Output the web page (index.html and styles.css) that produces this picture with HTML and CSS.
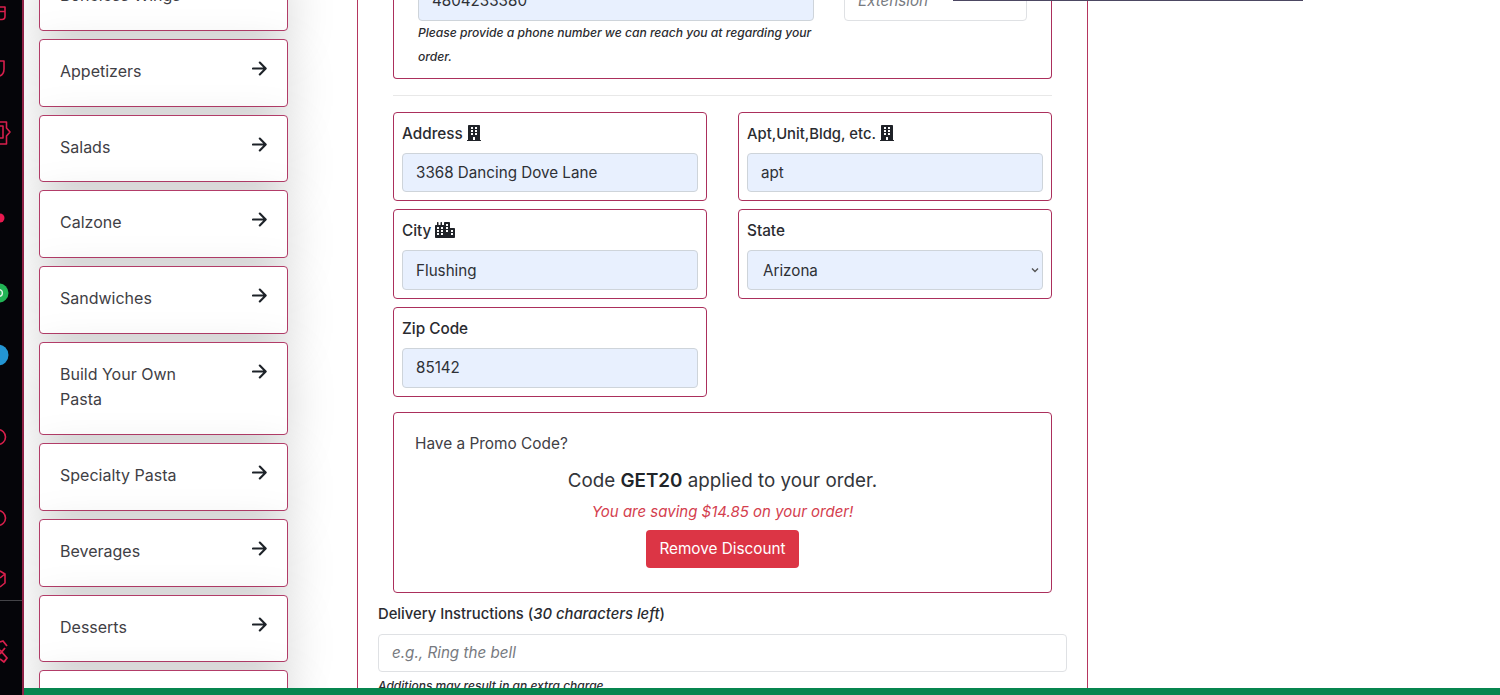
FILE: index.html
```html
<!DOCTYPE html>
<html lang="en">
<head>
<meta charset="utf-8">
<title>Checkout</title>
<link rel="stylesheet" href="styles.css">
</head>
<body>
<svg class="sprite" aria-hidden="true">
  <symbol id="i-arrow" viewBox="0 0 15 15"><path d="M1 7.5H13.6M7.8 1.6L13.7 7.5L7.8 13.4" fill="none" stroke="currentColor" stroke-width="2.1" stroke-linecap="round" stroke-linejoin="round"/></symbol>
  <symbol id="i-building" viewBox="0 0 448 512"><path fill="currentColor" d="M436 480h-20V24c0-13.255-10.745-24-24-24H56C42.745 0 32 10.745 32 24v456H12c-6.627 0-12 5.373-12 12v20h448v-20c0-6.627-5.373-12-12-12zM128 76c0-6.627 5.373-12 12-12h40c6.627 0 12 5.373 12 12v40c0 6.627-5.373 12-12 12h-40c-6.627 0-12-5.373-12-12V76zm0 96c0-6.627 5.373-12 12-12h40c6.627 0 12 5.373 12 12v40c0 6.627-5.373 12-12 12h-40c-6.627 0-12-5.373-12-12v-40zm52 148h-40c-6.627 0-12-5.373-12-12v-40c0-6.627 5.373-12 12-12h40c6.627 0 12 5.373 12 12v40c0 6.627-5.373 12-12 12zm76 160h-64v-84c0-6.627 5.373-12 12-12h40c6.627 0 12 5.373 12 12v84zm64-172c0 6.627-5.373 12-12 12h-40c-6.627 0-12-5.373-12-12v-40c0-6.627 5.373-12 12-12h40c6.627 0 12 5.373 12 12v40zm0-96c0 6.627-5.373 12-12 12h-40c-6.627 0-12-5.373-12-12v-40c0-6.627 5.373-12 12-12h40c6.627 0 12 5.373 12 12v40zm0-96c0 6.627-5.373 12-12 12h-40c-6.627 0-12-5.373-12-12V76c0-6.627 5.373-12 12-12h40c6.627 0 12 5.373 12 12v40z"/></symbol>
  <symbol id="i-city" viewBox="0 0 640 512"><path fill="currentColor" d="M616 192H480V24c0-13.26-10.74-24-24-24H312c-13.26 0-24 10.74-24 24v72h-64V16c0-8.84-7.16-16-16-16h-16c-8.84 0-16 7.16-16 16v80h-64V16c0-8.84-7.16-16-16-16H80c-8.84 0-16 7.16-16 16v80H24c-13.26 0-24 10.74-24 24v360c0 17.67 14.33 32 32 32h576c17.67 0 32-14.33 32-32V216c0-13.26-10.75-24-24-24zM128 404c0 6.63-5.37 12-12 12H76c-6.63 0-12-5.37-12-12v-40c0-6.63 5.37-12 12-12h40c6.63 0 12 5.37 12 12v40zm0-96c0 6.63-5.37 12-12 12H76c-6.63 0-12-5.37-12-12v-40c0-6.63 5.37-12 12-12h40c6.63 0 12 5.37 12 12v40zm0-96c0 6.63-5.37 12-12 12H76c-6.63 0-12-5.37-12-12v-40c0-6.63 5.37-12 12-12h40c6.63 0 12 5.37 12 12v40zm128 192c0 6.63-5.37 12-12 12h-40c-6.63 0-12-5.37-12-12v-40c0-6.63 5.37-12 12-12h40c6.63 0 12 5.37 12 12v40zm0-96c0 6.63-5.37 12-12 12h-40c-6.63 0-12-5.37-12-12v-40c0-6.63 5.37-12 12-12h40c6.63 0 12 5.37 12 12v40zm0-96c0 6.63-5.37 12-12 12h-40c-6.63 0-12-5.37-12-12v-40c0-6.63 5.37-12 12-12h40c6.63 0 12 5.37 12 12v40zm160 96c0 6.63-5.37 12-12 12h-40c-6.63 0-12-5.37-12-12v-40c0-6.63 5.37-12 12-12h40c6.63 0 12 5.37 12 12v40zm0-96c0 6.63-5.37 12-12 12h-40c-6.63 0-12-5.37-12-12v-40c0-6.63 5.37-12 12-12h40c6.63 0 12 5.37 12 12v40zm0-96c0 6.63-5.37 12-12 12h-40c-6.63 0-12-5.37-12-12V76c0-6.63 5.37-12 12-12h40c6.63 0 12 5.37 12 12v40zm160 288c0 6.63-5.37 12-12 12h-40c-6.63 0-12-5.37-12-12v-40c0-6.63 5.37-12 12-12h40c6.63 0 12 5.37 12 12v40zm0-96c0 6.63-5.37 12-12 12h-40c-6.63 0-12-5.37-12-12v-40c0-6.63 5.37-12 12-12h40c6.63 0 12 5.37 12 12v40z"/></symbol>
</svg>

<div class="page">
  <aside class="rail">
    <svg class="rail-art" width="22" height="695" viewBox="0 0 22 695" fill="none" stroke="#d81f4c" stroke-width="1.6" stroke-linejoin="round" aria-hidden="true">
      <path d="M0 7H5V16Q5 19.5 2 19.5H0M0 11.5H5"/>
      <path d="M0 61H4V69Q4 74 0 76"/>
      <path d="M0 122H6.5V128L10 132L6.5 136V144H0M0 126H3V138H0"/>
      <circle cx="0" cy="218" r="4.5" fill="#e8194f" stroke="none"/>
      <circle cx="-1" cy="293" r="9.5" fill="#22b455" stroke="none"/>
      <circle cx="-1" cy="293" r="3.4" stroke="#e6f5ea" stroke-width="1.4"/>
      <circle cx="-2" cy="355" r="10.5" fill="#2395d3" stroke="none"/>
      <circle cx="-2" cy="437" r="7.5"/>
      <circle cx="-2" cy="518" r="7.5"/>
      <path d="M0 571L5 574V583L0 587M0 578L5 574"/>
      <path d="M0 600.5H22" stroke="#444448" stroke-width="1"/>
      <path d="M0 642L3 641L7 646M0 650L7 658L4 662L0 659M0 654L5 648" stroke-width="1.8"/>
    </svg>
  </aside>

  <div class="workspace">
    <div class="scroller">
      <nav class="cats">
        <a class="cat"><span class="cat-name">Boneless Wings</span><svg class="cat-arrow"><use href="#i-arrow"/></svg></a>
        <a class="cat"><span class="cat-name">Appetizers</span><svg class="cat-arrow"><use href="#i-arrow"/></svg></a>
        <a class="cat"><span class="cat-name">Salads</span><svg class="cat-arrow"><use href="#i-arrow"/></svg></a>
        <a class="cat"><span class="cat-name">Calzone</span><svg class="cat-arrow"><use href="#i-arrow"/></svg></a>
        <a class="cat"><span class="cat-name">Sandwiches</span><svg class="cat-arrow"><use href="#i-arrow"/></svg></a>
        <a class="cat"><span class="cat-name">Build Your Own Pasta</span><svg class="cat-arrow"><use href="#i-arrow"/></svg></a>
        <a class="cat"><span class="cat-name">Specialty Pasta</span><svg class="cat-arrow"><use href="#i-arrow"/></svg></a>
        <a class="cat"><span class="cat-name">Beverages</span><svg class="cat-arrow"><use href="#i-arrow"/></svg></a>
        <a class="cat"><span class="cat-name">Desserts</span><svg class="cat-arrow"><use href="#i-arrow"/></svg></a>
        <a class="cat cat-empty"></a>
      </nav>

      <main class="order">
        <div class="inset">
          <section class="box phone-box">
            <div class="phone-col">
              <input class="field field-filled" value="4804233380" aria-label="Phone">
              <p class="note">Please provide a phone number we can reach you at regarding your order.</p>
            </div>
            <input class="field extension" placeholder="Extension" aria-label="Extension">
          </section>

          <hr class="rule">

          <div class="address-grid">
            <div class="box field-box">
              <label class="label">Address <svg class="ico-building"><use href="#i-building"/></svg></label>
              <input class="field field-filled" value="3368 Dancing Dove Lane">
            </div>
            <div class="box field-box">
              <label class="label label-tight">Apt,Unit,Bldg, etc. <svg class="ico-building"><use href="#i-building"/></svg></label>
              <input class="field field-filled" value="apt">
            </div>
            <div class="box field-box">
              <label class="label">City <svg class="ico-city"><use href="#i-city"/></svg></label>
              <input class="field field-filled" value="Flushing">
            </div>
            <div class="box field-box">
              <label class="label">State</label>
              <select class="field field-filled field-select"><option>Arizona</option></select>
            </div>
            <div class="box field-box">
              <label class="label">Zip Code</label>
              <input class="field field-filled" value="85142">
            </div>
          </div>

          <section class="box promo">
            <p class="promo-ask">Have a Promo Code?</p>
            <p class="promo-code">Code <strong>GET20</strong> applied to your order.</p>
            <p class="promo-save">You are saving $14.85 on your order!</p>
            <button class="btn-remove" type="button">Remove Discount</button>
          </section>
        </div>

        <label class="label label-delivery">Delivery Instructions (<em>30 characters left</em>)</label>
        <input class="field field-plain" placeholder="e.g., Ring the bell">
        <p class="note note-extra">Additions may result in an extra charge</p>
      </main>

      <aside class="side"></aside>
      <div class="menu-edge"></div>
    </div>
    <div class="green-bar"></div>
  </div>
</div>
</body>
</html>
```

FILE: styles.css
```css
* { box-sizing: border-box; }
html, body { margin: 0; height: 100%; overflow: hidden; }
body {
  font-family: Inter, "Liberation Sans", sans-serif;
  font-size: 15px;
  color: #333438;
  background: #fff;
}
.sprite { display: none; }

.page { display: flex; height: 695px; overflow: hidden; }

.rail {
  flex: 0 0 24px;
  background: #050509;
  border-right: 2px solid #8f2347;
}
.rail-art { display: block; overflow: hidden; }

.workspace { flex: 1; min-width: 0; display: flex; flex-direction: column; }
.scroller { flex: 1; min-height: 0; display: flex; overflow: hidden; position: relative; }
.green-bar { flex: 0 0 7px; background: #07864f; }

/* categories */
.cats {
  flex: 0 0 333px;
  padding: 0 69px 0 15px;
  margin-top: -37px;
  display: flex;
  flex-direction: column;
  gap: 8px;
}
.cat {
  display: flex;
  justify-content: space-between;
  align-items: flex-start;
  flex: none;
  padding: 19px 20px 21.6px;
  line-height: 25.2px;
  font-size: 16px;
  background: #fff;
  border: 1px solid #b23c68;
  border-radius: 4px;
  box-shadow: 0 16px 48px rgba(0, 0, 0, .175);
  color: #3f4045;
}
.cat-empty { height: 67.8px; }
.cat-name { width: 140px; }
.cat-arrow { width: 15px; height: 15px; margin-top: 2px; color: #1d2228; }

/* order column */
.order {
  flex: 0 0 731px;
  padding: 0 20px;
  margin-top: -19px;
  border-left: 1px solid #b5365f;
  border-right: 1px solid #b5365f;
  background: #fff;
}
.inset { margin: 0 15px; }
.side { flex: 1; }

.box { background: #fff; border: 1px solid #ab2f5c; border-radius: 4px; }

.field {
  display: block;
  width: 100%;
  height: 39.7px;
  padding: 6px 13px;
  font: inherit;
  font-size: 15.2px;
  color: #2e3036;
  background: #fff;
  border: 1px solid #dfe1e4;
  border-radius: 4px;
  outline: 0;
}
.field::placeholder { color: #777a80; font-style: italic; }
.field-filled { background: #e8f0fe; border-color: #ced4da; }
.field-plain { height: 38.5px; }
.field-select {
  appearance: none;
  padding-left: 15px;
  background-image: url("data:image/svg+xml,%3Csvg xmlns='http://www.w3.org/2000/svg' width='8' height='6' viewBox='0 0 8 6'%3E%3Cpath d='M1 1.5L4 4.5L7 1.5' fill='none' stroke='%23555' stroke-width='1.4'/%3E%3C/svg%3E");
  background-repeat: no-repeat;
  background-position: right 3px center;
}

.phone-box {
  display: flex;
  align-items: flex-start;
  padding: 0 24px 0 24px;
  border-top: 0;
  border-top-left-radius: 0;
  border-top-right-radius: 0;
  gap: 30px;
}
.phone-col { flex: 0 0 396px; }
.extension { flex: 0 0 183px; }

.note {
  margin: 0;
  font-size: 12.1px;
  font-weight: 500;
  font-style: italic;
  line-height: 24.6px;
  color: #2b2c30;
  padding: 0 0 7.8px;
}
.note-extra { margin-top: 2px; font-size: 12px; }

.rule { margin: 16px 0; border: 0; border-top: 1px solid #e8e8e8; }

.address-grid {
  display: grid;
  grid-template-columns: 314px 314px;
  justify-content: space-between;
  row-gap: 8px;
}
.field-box { padding: 8px; height: 89.7px; }
.label {
  display: block;
  height: 24px;
  line-height: 26px;
  margin-bottom: 8px;
  font-weight: 500;
  font-size: 15.3px;
  color: #2a2b30;
}
.label-tight { font-size: 14.8px; }
.ico-building { width: 14px; height: 16px; vertical-align: -2px; color: #1f2228; }
.ico-city { width: 20px; height: 16px; vertical-align: -2px; color: #1f2228; }

.promo {
  margin-top: 15px;
  height: 181px;
  padding: 19px 21px 0;
  text-align: center;
}
.promo-ask { margin: 0; height: 24px; line-height: 24px; text-align: left; font-size: 15.4px; color: #3f4045; }
.promo-code { margin: 11px 0 0; line-height: 28px; font-size: 18.8px; color: #33353a; }
.promo-code strong { font-weight: 600; color: #212529; }
.promo-save { margin: 5px 0 0; line-height: 24px; font-size: 15px; font-style: italic; color: #d4404e; }
.btn-remove {
  display: block;
  width: 153px;
  height: 38px;
  margin: 6px auto 0;
  font: inherit;
  font-size: 15.3px;
  color: #fff;
  background: #dc3545;
  border: 0;
  border-radius: 4px;
}

.label-delivery { margin: 9px 0 8px; font-size: 14.8px; line-height: 24px; }
.label-delivery em { font-weight: 500; }

.menu-edge {
  position: absolute;
  left: 929px;
  top: 0;
  width: 350px;
  height: 1px;
  background: #4c4762;
}
```
